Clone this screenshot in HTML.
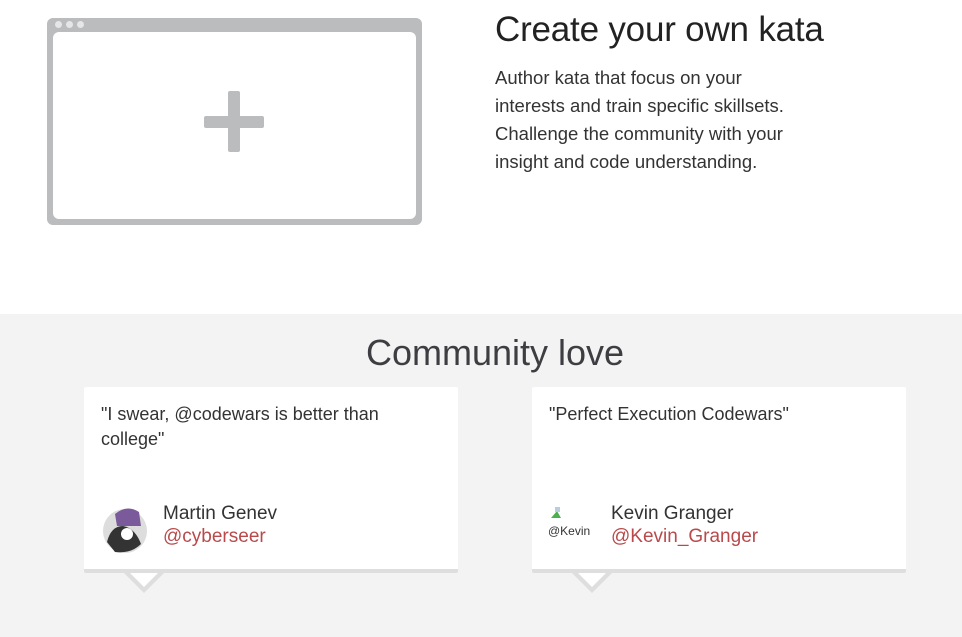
<!DOCTYPE html>
<html><head><style>
body{margin:0;width:962px;height:637px;overflow:hidden;background:#fff;font-family:"Liberation Sans",sans-serif;position:relative}
.a{position:absolute}
.win{left:47px;top:18px;width:375px;height:207px;background:#bbbcbe;border-radius:6px}
.inner{left:6px;top:14px;width:363px;height:187px;background:#fff;border-radius:6px}
.dot{width:7px;height:7px;border-radius:50%;background:#e6e6e8;top:3px}
h1{position:absolute;margin:0;left:495px;top:10px;font-size:35px;font-weight:normal;color:#222;letter-spacing:-0.2px}
p.t{position:absolute;margin:0;left:495px;top:64px;font-size:18.5px;line-height:28px;color:#333;width:315px}
.gray{left:0;top:314px;width:962px;height:323px;background:#f3f3f3}
h2{position:absolute;margin:0;width:962px;left:14px;text-align:center;top:332px;font-size:36px;font-weight:normal;color:#3d3d42}
.card{width:374px;height:182px;background:#fff;border-bottom:4px solid #dedede;border-radius:2px;top:387px}
.q{position:absolute;left:17px;top:15px;font-size:18px;line-height:25px;color:#333;width:320px}
.name{position:absolute;left:79px;top:116px;font-size:19px;color:#333}
.h{position:absolute;left:79px;top:139px;font-size:19px;color:#b9494b}
</style></head><body>
<div class="a win"><div class="a dot" style="left:8px"></div><div class="a dot" style="left:19px"></div><div class="a dot" style="left:30px"></div>
<div class="a inner"><div class="a" style="left:151px;width:60px;height:12px;background:#bbbcbe;border-radius:2px;top:84px"></div><div class="a" style="left:175px;top:59px;width:12px;height:61px;background:#bbbcbe;border-radius:2px"></div></div></div>
<h1>Create your own kata</h1>
<p class="t">Author kata that focus on your interests and train specific skillsets. Challenge the community with your insight and code understanding.</p>
<div class="a gray"></div>
<h2>Community love</h2>
<svg class="a" style="left:0;top:568px" width="962" height="30"><polygon points="121,2 167,2 144,25" fill="#dedede"/><polygon points="125,0 163,0 144,19" fill="#fff"/><polygon points="569,2 615,2 592,25" fill="#dedede"/><polygon points="573,0 611,0 592,19" fill="#fff"/></svg>
<div class="a card" style="left:84px"><div class="q">"I swear, @codewars is better than college"</div>
<svg class="a" style="left:17px;top:117px" width="48" height="50"><circle cx="24" cy="27" r="22" fill="#ddd"/><path d="M14 10 Q26 0 38 8 L40 22 L16 22Z" fill="#7a5a9a"/><path d="M6 38 Q10 22 22 22 Q34 24 40 40 Q30 50 14 48Z" fill="#333"/><circle cx="26" cy="30" r="6" fill="#fff"/></svg>
<div class="name">Martin Genev</div><div class="h">@cyberseer</div></div>
<div class="a card" style="left:532px"><div class="q">"Perfect Execution Codewars"</div>
<svg class="a" style="left:17px;top:119px" width="14" height="14"><path d="M2 12 L8 5 L12 12Z" fill="#4caf50"/><rect x="6" y="1" width="5" height="5" fill="#bcd"/></svg>
<div class="a" style="left:16px;top:137px;font-size:12px;color:#333;width:46px;overflow:hidden;white-space:nowrap">@Kevin</div>
<div class="name">Kevin Granger</div><div class="h">@Kevin_Granger</div></div>
</body></html>
